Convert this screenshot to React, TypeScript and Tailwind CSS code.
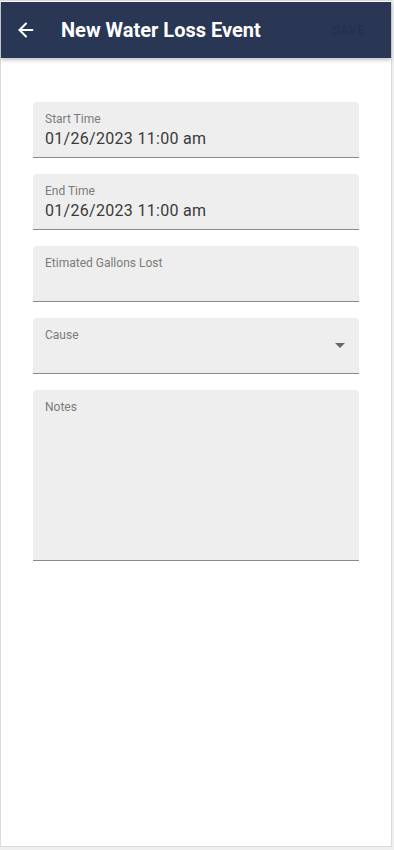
import { ArrowLeft } from "lucide-react";

const Field = ({ label, value }: { label: string; value?: string }) => (
	<div className="h-[56px] rounded-t bg-[#eeeeee] border-b border-[#8a8a8a] px-3 pt-[9px]">
		<p className="text-[12px] leading-[16px] text-[#7b7b7b]">{label}</p>
		{value && (
			<p className="mt-[2px] text-[16px] leading-[20px] text-[#3a3a3a] tracking-[0.3px]">
				{value}
			</p>
		)}
	</div>
);

export default function App() {
	return (
		<div
			className="h-[850px] w-[394px] bg-[#efefef]"
			style={{ fontFamily: "Roboto, 'Liberation Sans', sans-serif" }}
		>
			<div className="h-[847px] w-[392px] border border-[#dadada] bg-white">
				<header className="mt-px flex h-[56px] items-center bg-[#293755] shadow-[0_2px_4px_rgba(0,0,0,0.25)]">
					<button className="ml-[14px] text-white">
						<ArrowLeft size={22} strokeWidth={2.2} />
					</button>
					<h1 className="ml-[24px] text-[20px] font-bold text-white">
						New Water Loss Event
					</h1>
					<span className="ml-auto mr-[26px] text-[13px] font-medium text-[#233050] tracking-wide">
						SAVE
					</span>
				</header>
				<div className="flex flex-col gap-4 px-[32px] pt-[44px]">
					<Field label="Start Time" value="01/26/2023 11:00 am" />
					<Field label="End Time" value="01/26/2023 11:00 am" />
					<Field label="Etimated Gallons Lost" />
					<div className="relative">
						<Field label="Cause" />
						<svg
							className="absolute right-[14px] top-[25px]"
							width="10"
							height="5"
							viewBox="0 0 10 5"
						>
							<path d="M0 0 L10 0 L5 5 Z" fill="#666666" />
						</svg>
					</div>
					<div className="h-[171px] rounded-t bg-[#eeeeee] border-b border-[#8a8a8a] px-3 pt-[9px]">
						<p className="text-[12px] leading-[16px] text-[#7b7b7b]">Notes</p>
					</div>
				</div>
			</div>
		</div>
	);
}
